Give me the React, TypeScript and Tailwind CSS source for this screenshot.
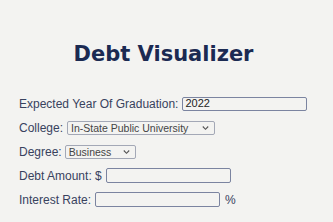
function Chevron() {
  return (
    <svg
      className="pointer-events-none absolute right-[6px] top-1/2 -translate-y-1/2"
      width="7"
      height="5"
      viewBox="0 0 7 5"
      fill="none"
    >
      <path d="M0.8 1 L3.5 3.8 L6.2 1" stroke="#555" strokeWidth="1.1" />
    </svg>
  );
}

export default function App() {
  return (
    <div className="min-h-[222px] w-full bg-[#f3f3f1] font-['Liberation_Sans',Arial,sans-serif] text-[12px] text-[#38425e]">
      <h1 className="pt-[40px] pb-[28px] text-center text-[21px] leading-[28px] font-bold text-[#1b2a52] font-['DejaVu_Sans',sans-serif] pr-[6px]">
        Debt Visualizer
      </h1>
      <div className="flex flex-col gap-[9px] pl-[19px]">
        <div className="flex items-center h-[15px]">
          <span>Expected Year Of Graduation:</span>
          <input
            className="ml-[4px] h-[14px] w-[125px] rounded-[2px] border border-[#7b84a0] bg-transparent px-[2px] text-[11px] text-[#222]"
            defaultValue="2022"
          />
        </div>
        <div className="flex items-center h-[15px]">
          <span>College:</span>
          <div className="relative ml-[4px]">
            <select className="block h-[14px] w-[148px] appearance-none rounded-[2px] border border-[#a3a8b6] bg-transparent pl-[3px] text-[10.5px] leading-[12px] text-[#444]">
              <option>In-State Public University</option>
            </select>
            <Chevron />
          </div>
        </div>
        <div className="flex items-center h-[15px]">
          <span>Degree:</span>
          <div className="relative ml-[3px]">
            <select className="block h-[14px] w-[71px] appearance-none rounded-[2px] border border-[#a3a8b6] bg-transparent pl-[3px] text-[10.5px] leading-[12px] text-[#444]">
              <option>Business</option>
            </select>
            <Chevron />
          </div>
        </div>
        <div className="flex items-center h-[15px]">
          <span>Debt Amount: $</span>
          <input className="ml-[4px] h-[15px] w-[125px] rounded-[2px] border border-[#7b84a0] bg-transparent px-[2px]" />
        </div>
        <div className="flex items-center h-[15px]">
          <span>Interest Rate:</span>
          <input className="ml-[4px] h-[15px] w-[125px] rounded-[2px] border border-[#7b84a0] bg-transparent px-[2px]" />
          <span className="ml-[5px]">%</span>
        </div>
      </div>
    </div>
  );
}
